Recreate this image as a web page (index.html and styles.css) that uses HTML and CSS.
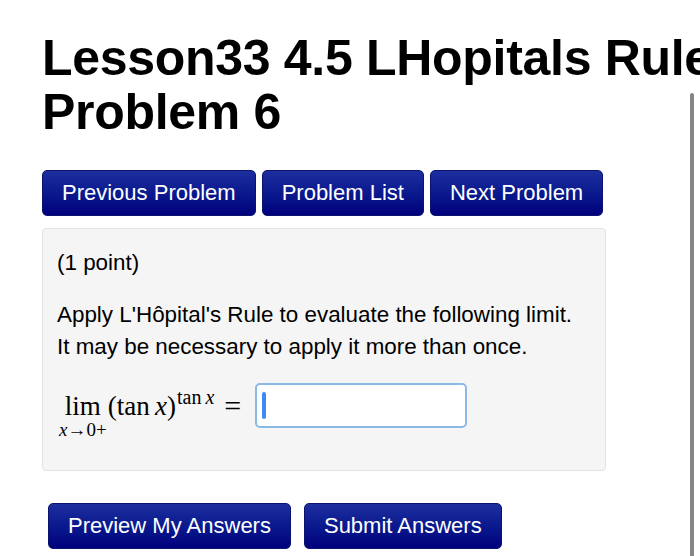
FILE: index.html
```html
<!DOCTYPE html>
<html lang="en">
<head>
    <meta charset="UTF-8">
    <meta name="viewport" content="width=device-width, initial-scale=1.0">
    <title>Lesson33 4.5 LHopitals Rule Problem 6</title>
    <link rel="stylesheet" href="styles.css">
</head>
<body>
    <div class="page">
        <h1 class="problem-title">Lesson33 4.5 LHopitals Rule Problem 6</h1>

        <div class="nav-buttons">
            <a class="nav-btn" href="#">Previous Problem</a>
            <a class="nav-btn" href="#">Problem List</a>
            <a class="nav-btn" href="#">Next Problem</a>
        </div>

        <div class="problem-box">
            <p class="points">(1 point)</p>
            <p class="statement">Apply L'Hôpital's Rule to evaluate the following limit.<br>It may be necessary to apply it more than once.</p>

            <div class="math-row">
                <span class="lim">
                    <span class="lim-word">lim</span>
                    <span class="lim-under"><i>x</i>→0+</span>
                </span>
                <span class="expr">(tan&thinsp;<i>x</i>)<sup>tan&thinsp;<i>x</i></sup></span>
                <span class="equals">=</span>
                <span class="answer-box"><span class="caret"></span></span>
            </div>
        </div>

        <div class="submit-row">
            <button class="nav-btn">Preview My Answers</button>
            <button class="nav-btn">Submit Answers</button>
        </div>
    </div>

    <!-- scroll indicator of the mobile browser -->
    <div class="scroll-indicator"></div>
</body>
</html>
```

FILE: styles.css
```css
html, body {
    margin: 0;
    padding: 0;
    background-color: #fff;
    overflow: hidden;
    height: 556px;
}
body {
    font-family: "Liberation Sans", Arial, Helvetica, sans-serif;
    color: #000;
    position: relative;
}
.page {
    padding-left: 42px;
}
.problem-title {
    width: 760px;
    margin: 31px 0 0 0;
    font-size: 50px;
    line-height: 54px;
    font-weight: bold;
    letter-spacing: -0.3px;
}
.nav-buttons {
    display: flex;
    gap: 6px;
    margin-top: 31px;
}
.nav-btn {
    display: inline-block;
    height: 46px;
    line-height: 44px;
    padding: 0 19px;
    font-family: "Liberation Sans", Arial, Helvetica, sans-serif;
    font-size: 22px;
    color: #fff;
    text-decoration: none;
    background: linear-gradient(to bottom, #1d2e9e, #0a1a8e 50%, #00007c);
    border: 1px solid #0a1470;
    border-radius: 5px;
    box-sizing: border-box;
    cursor: pointer;
}
.problem-box {
    width: 564px;
    box-sizing: border-box;
    margin-top: 12px;
    padding: 14px 14px 32px 14px;
    background-color: #f5f5f5;
    border: 1px solid #e3e3e3;
    border-radius: 4px;
    font-size: 22.4px;
}
.points {
    margin: 4px 0 0 0;
    line-height: 32px;
}
.statement {
    margin: 20px 0 0 0;
    line-height: 32px;
}
.math-row {
    display: flex;
    align-items: flex-start;
    margin-top: 20px;
    padding-left: 2px;
    font-family: "Liberation Serif", "Times New Roman", serif;
    font-size: 27px;
}
.lim {
    display: inline-flex;
    flex-direction: column;
    align-items: center;
    margin-top: 10px;
}
.lim-word {
    line-height: 26px;
}
.lim-under {
    margin-top: 2px;
    font-size: 19px;
    line-height: 17px;
}
.expr {
    margin-top: 10px;
    margin-left: 1px;
    line-height: 26px;
}
.expr sup {
    font-size: 20px;
    vertical-align: 11px;
    line-height: 0;
    margin-left: 1px;
}
.equals {
    margin-top: 10px;
    margin-left: 10px;
    line-height: 26px;
    font-size: 30px;
}
.answer-box {
    display: block;
    width: 212px;
    height: 45px;
    margin-left: 14px;
    box-sizing: border-box;
    background-color: #fff;
    border: 2px solid #8bb9e6;
    border-radius: 5px;
    padding: 7px 5px;
}
.caret {
    display: block;
    width: 4px;
    height: 27px;
    border-radius: 2px;
    background-color: #3d8af7;
}
.submit-row {
    display: flex;
    gap: 13px;
    margin-top: 32px;
    padding-left: 6px;
}
.scroll-indicator {
    position: absolute;
    left: 690px;
    top: 93px;
    width: 4px;
    height: 480px;
    border-radius: 2px;
    background-color: #858585;
}
```
